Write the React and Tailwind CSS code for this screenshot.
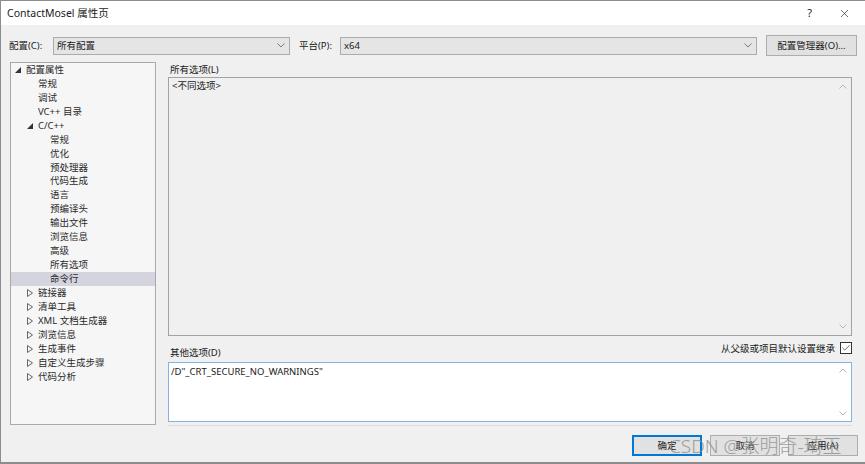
import { Check, X } from "lucide-react";

const TREE = [
  { t: "配置属性", lvl: 0, arrow: "open" },
  { t: "常规", lvl: 1 },
  { t: "调试", lvl: 1 },
  { t: "VC++ 目录", lvl: 1 },
  { t: "C/C++", lvl: 1, arrow: "open" },
  { t: "常规", lvl: 2 },
  { t: "优化", lvl: 2 },
  { t: "预处理器", lvl: 2 },
  { t: "代码生成", lvl: 2 },
  { t: "语言", lvl: 2 },
  { t: "预编译头", lvl: 2 },
  { t: "输出文件", lvl: 2 },
  { t: "浏览信息", lvl: 2 },
  { t: "高级", lvl: 2 },
  { t: "所有选项", lvl: 2 },
  { t: "命令行", lvl: 2, selected: true },
  { t: "链接器", lvl: 1, arrow: "closed" },
  { t: "清单工具", lvl: 1, arrow: "closed" },
  { t: "XML 文档生成器", lvl: 1, arrow: "closed" },
  { t: "浏览信息", lvl: 1, arrow: "closed" },
  { t: "生成事件", lvl: 1, arrow: "closed" },
  { t: "自定义生成步骤", lvl: 1, arrow: "closed" },
  { t: "代码分析", lvl: 1, arrow: "closed" },
];

const INDENT = { 0: "pl-[4px]", 1: "pl-[16px]", 2: "pl-[28px]" };

function Chevron({ up = false, color = "#9a9a9a" }) {
  return (
    <svg width="8" height="5" viewBox="0 0 8 5">
      <polyline
        points={up ? "0.5,4.5 4,1 7.5,4.5" : "0.5,0.5 4,4 7.5,0.5"}
        fill="none"
        stroke={color}
        strokeWidth="1"
      />
    </svg>
  );
}

function Arrow({ kind }) {
  if (kind === "open") {
    return (
      <svg width="6" height="6" viewBox="0 0 6 6">
        <polygon points="6,0 6,6 0,6" fill="#333" />
      </svg>
    );
  }
  if (kind === "closed") {
    return (
      <svg width="6" height="8" viewBox="0 0 6 8">
        <polygon points="0.5,0.5 5.5,4 0.5,7.5" fill="none" stroke="#666" strokeWidth="1" />
      </svg>
    );
  }
  return null;
}

function Combo({ text, width }) {
  return (
    <div className={`${width} h-[18px] flex items-center justify-between bg-[#e5e5e5] border border-[#acacac] pl-[3px] pr-[4px]`}>
      <span>{text}</span>
      <Chevron color="#7a7a7a" />
    </div>
  );
}

function Button({ children, primary }) {
  return (
    <div
      className={`w-[70px] h-[21px] flex items-center justify-center bg-[#e1e1e1] ${
        primary ? "border-2 border-[#0078d7]" : "border border-[#adadad]"
      }`}
    >
      {children}
    </div>
  );
}

export default function App() {
  return (
    <div
      className="relative w-[865px] h-[464px] bg-[#f0f0f0] border-t border-l border-b-2 border-[#8c8c8c] text-[9.5px] leading-[14px] text-[#1a1a1a] overflow-hidden flex flex-col"
      style={{ fontFamily: '"Noto Sans", "Noto Sans CJK SC", sans-serif' }}
    >
      {/* title bar */}
      <div className="h-[24px] bg-white flex items-center justify-between pl-[6px] pr-[14px] shrink-0">
        <span className="text-[10.5px]">ContactMosel 属性页</span>
        <div className="flex items-center gap-[26px] text-[#222]">
          <span className="text-[11px]">?</span>
          <X size={13} strokeWidth={1.2} />
        </div>
      </div>

      {/* config row */}
      <div className="flex items-center h-[21px] mt-[10px] pl-[8px] shrink-0">
        <span className="w-[44px]">配置(C):</span>
        <Combo text="所有配置" width="w-[237px]" />
        <span className="w-[41px] ml-[9px]">平台(P):</span>
        <Combo text="x64" width="w-[417px]" />
        <div className="ml-[9px] w-[91px] h-[21px] flex items-center justify-center bg-[#e1e1e1] border border-[#adadad]">
          配置管理器(O)...
        </div>
      </div>

      {/* main */}
      <div className="flex mt-[6px] pl-[9px] h-[364px] shrink-0">
        {/* tree */}
        <div className="w-[146px] h-[363px] bg-[#f6f6f6] border border-[#a9a9a9] text-[#2a2a2a]">
          {TREE.map((n, i) => (
            <div
              key={i}
              className={`h-[13.95px] flex items-center ${INDENT[n.lvl]} ${n.selected ? "bg-[#d4d4df]" : ""}`}
            >
              <div className="w-[11px] flex items-center">
                <Arrow kind={n.arrow} />
              </div>
              <span>{n.t}</span>
            </div>
          ))}
        </div>

        {/* right column */}
        <div className="ml-[12px] w-[684px] flex flex-col border-b border-[#dcdcdc]">
          <div className="h-[15px] pl-[2px] pt-[1px]">所有选项(L)</div>
          <div className="h-[259px] flex bg-[#f0f0f0] border border-[#a3a3a3]">
            <div className="flex-1 pl-[3px] pt-[1px]">&lt;不同选项&gt;</div>
            <div className="w-[16px] flex flex-col items-center justify-between py-[6px]">
              <Chevron up color="#b5b5b5" />
              <Chevron color="#b5b5b5" />
            </div>
          </div>
          <div className="h-[26px] flex justify-between">
            <span className="pt-[10px] pl-[2px]">其他选项(D)</span>
            <div className="flex items-start gap-[5px] pt-[6px]">
              <span className="leading-[13px]">从父级或项目默认设置继承</span>
              <div className="w-[12px] h-[12px] bg-white border border-[#333] flex items-center justify-center">
                <Check size={10} strokeWidth={1.6} color="#222" />
              </div>
            </div>
          </div>
          <div className="h-[60px] flex bg-white border border-[#86b3dc]">
            <div className="flex-1 pl-[2px] pt-[2px]">/D"_CRT_SECURE_NO_WARNINGS"</div>
            <div className="w-[16px] flex flex-col items-center justify-between py-[5px]">
              <Chevron up color="#b5b5b5" />
              <Chevron color="#b5b5b5" />
            </div>
          </div>
        </div>
      </div>

      {/* buttons */}
      <div className="flex justify-end gap-[8px] pr-[7px] mt-[9px]">
        <Button primary>确定</Button>
        <Button>取消</Button>
        <Button>应用(A)</Button>
      </div>

      {/* watermark */}
      <div className="absolute left-[668px] top-[433px] text-[19px] leading-[24px] whitespace-nowrap text-[#8d8d8d] opacity-80 font-light pointer-events-none">
        CSDN @张明奇-琦玉
      </div>
    </div>
  );
}
